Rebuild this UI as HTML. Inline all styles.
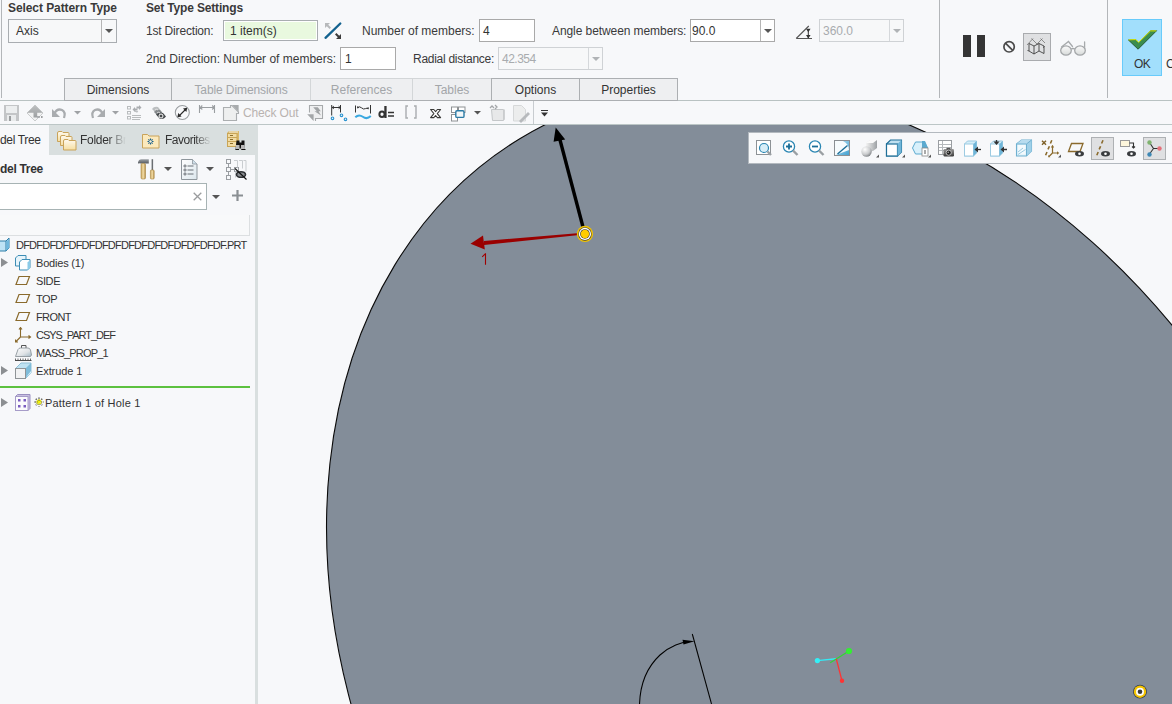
<!DOCTYPE html>
<html><head><meta charset="utf-8">
<style>
*{box-sizing:border-box;margin:0;padding:0}
html,body{width:1172px;height:704px;overflow:hidden;background:#f7f8fa;font-family:"Liberation Sans",sans-serif;color:#333;font-size:12px}
.a{position:absolute;white-space:nowrap}
.lbl{position:absolute;white-space:nowrap;font-size:12px;color:#3a3a3a;line-height:14px}
.fld{position:absolute;background:#fff;border:1px solid #a9a9a9}
.fld.dis{background:#f7f8f9;border-color:#cfd2d5}
.dd{position:absolute;top:0;bottom:0;border-left:1px solid #b5b5b5}
.tri{position:absolute;width:0;height:0;border-left:4px solid transparent;border-right:4px solid transparent;border-top:4px solid #555}
.tab{position:absolute;top:78px;height:23px;border:1px solid #acafb2;background:#eeeff1;text-align:center;line-height:23px;font-size:12px;z-index:2}
.tab.dis{color:#a3a6a9;background:#eeeff1;border-color:#d3d6d8;border-bottom-color:#acafb2;z-index:1}
.ti{position:absolute;font-size:11px;line-height:14px;color:#333;white-space:nowrap}
</style></head><body>

<!-- ===== Ribbon ===== -->
<div class="a" style="left:0;top:0;width:1172px;height:100px;background:#f7f8fa"></div>
<div class="a" style="left:1px;top:0;width:1px;height:98px;background:#b3b6b9"></div>
<div class="a" style="left:939px;top:0;width:1px;height:98px;background:#b3b6b9"></div>
<div class="a" style="left:1107px;top:0;width:1px;height:98px;background:#b3b6b9"></div>

<div class="lbl" style="left:8px;top:1px;font-weight:bold;letter-spacing:-0.08px">Select Pattern Type</div>
<div class="fld" style="left:8px;top:19px;width:109px;height:24px;background:#f7f8f9;border-color:#a9adb1">
  <div class="a" style="left:7px;top:4px;font-size:12px">Axis</div>
  <div class="dd" style="left:92px;width:16px"><div class="tri" style="left:3px;top:9px"></div></div>
</div>

<div class="lbl" style="left:146px;top:1px;font-weight:bold;letter-spacing:-0.17px">Set Type Settings</div>
<div class="lbl" style="left:146px;top:24px;letter-spacing:-0.18px">1st Direction:</div>
<div class="fld" style="left:223px;top:20px;width:95px;height:21px;background:#e9f9df;border-color:#a9adb1;box-shadow:inset 0 0 0 1px #fff">
  <div class="a" style="left:6px;top:3px">1 item(s)</div>
</div>
<div class="lbl" style="left:362px;top:24px">Number of members:</div>
<div class="fld" style="left:479px;top:19px;width:56px;height:23px"><div class="a" style="left:3px;top:4px">4</div></div>
<div class="lbl" style="left:552px;top:24px;letter-spacing:-0.08px">Angle between members:</div>
<div class="fld" style="left:690px;top:19px;width:85px;height:23px">
  <div class="a" style="left:1px;top:4px">90.0</div>
  <div class="dd" style="left:69px;width:15px"><div class="tri" style="left:3px;top:9px"></div></div>
</div>
<div class="fld dis" style="left:819px;top:19px;width:85px;height:23px">
  <div class="a" style="left:3px;top:4px;color:#a8abae">360.0</div>
  <div class="dd" style="left:69px;width:15px;border-color:#d5d8db"><div class="tri" style="left:3px;top:9px;border-top-color:#b0b3b6"></div></div>
</div>

<div class="lbl" style="left:146px;top:52px">2nd Direction: Number of members:</div>
<div class="fld" style="left:340px;top:47px;width:56px;height:23px"><div class="a" style="left:4px;top:4px">1</div></div>
<div class="lbl" style="left:413px;top:52px;letter-spacing:-0.27px">Radial distance:</div>
<div class="fld dis" style="left:498px;top:47px;width:105px;height:23px">
  <div class="a" style="left:3px;top:4px;color:#a8abae;letter-spacing:-0.5px">42.354</div>
  <div class="dd" style="left:89px;width:15px;border-color:#d5d8db"><div class="tri" style="left:3px;top:9px;border-top-color:#b0b3b6"></div></div>
</div>

<!-- ribbon icons -->
<svg class="a" style="left:320px;top:18px" width="24" height="26" viewBox="320 18 24 26">
  <path d="M325.5,37.8 L340.3,23.5" stroke="#13628f" stroke-width="2.3" stroke-linecap="round"/>
  <path d="M325,23 h5 l-1.8,1.8 l2.8,2.8 l-1.4,1.4 l-2.8,-2.8 l-1.8,1.8z" fill="#b7b9bb"/>
  <path d="M341,39 h-5 l1.8,-1.8 l-2.8,-2.8 l1.4,-1.4 l2.8,2.8 l1.8,-1.8z" fill="#3b3b3b"/>
</svg>
<svg class="a" style="left:794px;top:24px" width="20" height="17" viewBox="794 24 20 17">
  <path d="M796.2,38.5 h15.8 M796.2,38.5 L808.8,26" stroke="#555" stroke-width="1.1" fill="none"/>
  <path d="M808.3,29.2 v8.8" stroke="#333" stroke-width="1"/>
  <path d="M806,28.8 h4.6 l-2.3,3.4z M806,35 h4.6 l-2.3,3.4z" fill="#333"/>
</svg>
<div class="a" style="left:963px;top:35px;width:8px;height:22px;background:#353535"></div>
<div class="a" style="left:977px;top:35px;width:8px;height:22px;background:#353535"></div>
<svg class="a" style="left:1001px;top:39px" width="17" height="16" viewBox="1001 39 17 16">
  <circle cx="1009.1" cy="46.8" r="5.2" fill="none" stroke="#4a4a4a" stroke-width="1.7"/>
  <path d="M1005.5,43.2 l7.2,7.2" stroke="#4a4a4a" stroke-width="1.7"/>
</svg>
<div class="a" style="left:1023px;top:33px;width:28px;height:28px;background:#dfe0e2;border:1px solid #a9abae"></div>
<svg class="a" style="left:1025px;top:36px" width="24" height="22" viewBox="1025 36 24 22">
  <g stroke="#3a3a3a" stroke-width="0.85" fill="none">
  <path d="M1029,43.5 L1034,46 L1039,43.5 L1044,46"/>
  <path d="M1029,43.5 V51 L1034,54 V46 M1034,54 L1039,51 V43.5 M1039,51 L1044,53.5 V46"/>
  <path d="M1027.5,50.5 L1029,51 M1043,47.5 l1.5,-1"/>
  </g>
  <g stroke="#666" stroke-width="0.7" fill="none">
  <path d="M1027,45 L1033,38.5 M1031.5,38.5 L1038,45 M1036,45 L1042.5,38.5 M1040.5,38.5 L1045,43"/>
  </g>
</svg>
<svg class="a" style="left:1058px;top:38px" width="30" height="20" viewBox="1058 38 30 20">
  <defs><linearGradient id="lens" x1="0" y1="0" x2="0" y2="1"><stop offset="0" stop-color="#fbfbfb"/><stop offset="1" stop-color="#d7dad9"/></linearGradient></defs>
  <path d="M1061.5,47 L1068.5,41.5 L1072.5,46.5 M1084.6,42 V49" stroke="#a7aaac" stroke-width="1.3" fill="none" stroke-linecap="round"/>
  <ellipse cx="1066" cy="50.5" rx="5.3" ry="4.6" fill="url(#lens)" stroke="#a3a6a8" stroke-width="1.3"/>
  <ellipse cx="1080" cy="50.5" rx="5.3" ry="4.6" fill="url(#lens)" stroke="#a3a6a8" stroke-width="1.3"/>
  <path d="M1071.2,49 q1.8,-1 3.6,0" stroke="#a3a6a8" stroke-width="1.3" fill="none"/>
</svg>
<!-- OK button -->
<div class="a" style="left:1122px;top:19px;width:40px;height:57px;background:#a2dffc;border:1px solid #68cbfb"></div>
<svg class="a" style="left:1126px;top:28px" width="34" height="24" viewBox="1126 28 34 24">
  <path d="M1128.4,40 L1135.8,39.6 L1138.6,42.7 L1150.6,30.7 L1156.6,30.7 L1138.1,49.2z" fill="#3a8d4f" stroke="#1c4a24" stroke-width="0.8" stroke-linejoin="round"/>
  <path d="M1128.6,39.9 L1135.8,39.6 L1138.6,42.5 L1150.6,30.9 L1156.2,30.9" stroke="#e2f000" stroke-width="1" fill="none"/>
</svg>
<div class="a" style="left:1134px;top:57px;font-size:12px;color:#333;letter-spacing:-0.5px">OK</div>
<div class="a" style="left:1166px;top:57px;font-size:12px;color:#333">C</div>

<!-- tabs -->
<div class="tab" style="left:64px;width:108px">Dimensions</div>
<div class="tab dis" style="left:171px;width:140px;letter-spacing:-0.1px">Table Dimensions</div>
<div class="tab dis" style="left:310px;width:103px">References</div>
<div class="tab dis" style="left:412px;width:80px">Tables</div>
<div class="tab" style="left:491px;width:89px">Options</div>
<div class="tab" style="left:579px;width:99px">Properties</div>
<div class="a" style="left:0;top:100px;width:1172px;height:1px;background:#b9c2c2"></div>

<!-- toolbar row -->
<div class="a" style="left:0;top:101px;width:1172px;height:23px;background:#f7f8fa"></div>
<div class="a" style="left:0;top:124px;width:1172px;height:1px;background:#bcc6c6"></div>
<div class="a" style="left:533px;top:101px;width:1px;height:23px;background:#c8ccd0"></div>
<div class="a" style="left:243px;top:106px;font-size:12px;color:#b9b3b0;letter-spacing:-0.15px">Check Out</div>
<svg class="a" style="left:0;top:100px" width="560" height="24" viewBox="0 100 560 24">
  <!-- save -->
  <rect x="4" y="105" width="15" height="16" fill="#c3c5c7"/>
  <rect x="6" y="106" width="11" height="7" fill="#eceeef"/>
  <rect x="7" y="115" width="9" height="6" fill="#e9ebec"/>
  <rect x="9" y="116" width="2" height="5" fill="#9a9d9f"/>
  <!-- regen diamond -->
  <defs><linearGradient id="rg" x1="0" y1="0" x2="0" y2="1"><stop offset="0" stop-color="#bdbfc0"/><stop offset="1" stop-color="#9c9fa1"/></linearGradient></defs>
  <path d="M35,105 l8,8 l-8,8 l-8,-8z" fill="#f1f2f2" stroke="#c5c7c8" stroke-width="0.9"/>
  <path d="M35,105.3 L42.6,112.8 H37.2 V117.6 H33.5 V112.8 H27.4z" fill="url(#rg)"/>
  <rect x="37" y="116.2" width="3" height="1.5" fill="#9c9fa1"/>
  <rect x="41" y="116.2" width="1.6" height="1.6" fill="#858889"/>
  <!-- undo -->
  <path d="M54,114 q3,-6 8,-4 q4,2 2,8" stroke="#a9acaf" stroke-width="2.2" fill="none"/>
  <path d="M52,109 v8 h8z" fill="#a9acaf"/>
  <path d="M74,111 h7 l-3.5,3.5z" fill="#9fa2a5"/>
  <!-- redo -->
  <path d="M103,114 q-3,-6 -8,-4 q-4,2 -2,8" stroke="#a9acaf" stroke-width="2.2" fill="none"/>
  <path d="M105,109 v8 h-8z" fill="#a9acaf"/>
  <path d="M112,111 h7 l-3.5,3.5z" fill="#9fa2a5"/>
  <!-- regen list -->
  <g fill="none" stroke="#b9bcbe" stroke-width="1"><rect x="127.5" y="106.5" width="3" height="2.5"/><rect x="127.5" y="111.5" width="3" height="2.5"/><rect x="127.5" y="116.5" width="3" height="2.5"/>
  <path d="M132,115.5 h9 M132,117.5 h9 M132,119.5 h8"/></g>
  <path d="M132.5,109.5 l2.5,-2.5 v1.5 h2.5 v2 h-2.5 v1.5z" fill="#a9acaf"/>
  <path d="M141.5,107.5 l-2.5,-2.5 v1.5 h-2.5 v2 h2.5 v1.5z" fill="#a9acaf"/>
  <path d="M135,110.5 q1,2 3,1" stroke="#b5b8bb" stroke-width="1.2" fill="none"/>
  <!-- layers eye -->
  <path d="M152,109 q2,-3 6,-2 l4,5 q-1,3 -5,2z" fill="#bcbfc1"/>
  <path d="M154,112 q2,-3 6,-2 l4,5 q-1,3 -5,2z" fill="#85898c"/>
  <path d="M156,114.5 q3,-3 7,-1.5 l3,3.5 q-2,3 -6,2.5z" fill="#45494c"/>
  <path d="M155,110 q1.5,-1.5 3,0 M157,113 q1.5,-1.5 3,0" stroke="#e8e8e8" stroke-width="0.9" fill="none"/>
  <circle cx="161" cy="116" r="2" fill="none" stroke="#fff" stroke-width="1"/>
  <!-- circle arrow -->
  <circle cx="182.3" cy="112.5" r="7" fill="none" stroke="#9a9ea1" stroke-width="1.1"/>
  <path d="M179,116 l6.5,-6.5" stroke="#2a2a2a" stroke-width="1.1"/>
  <path d="M187.2,107.8 l-4.2,0.8 l3.4,3.4z M177.4,117.2 l4.2,-0.8 l-3.4,-3.4z" fill="#2a2a2a"/>
  <!-- dim -->
  <path d="M199.5,105 v8 M214.5,105 v8 M200,107.5 h14 M202.3,105.5 l-2,2 l2,2 M212.2,105.5 l2,2 l-2,2" stroke="#9a9ea1" fill="none" stroke-width="1.1"/>
  <!-- checkout doc -->
  <path d="M223.5,120.5 V107.5 H230.5 V105.5 H232 L238.5,112 V113.5 H236.5 V120.5z" fill="#eeefef" stroke="#abaeb0" stroke-width="1.1"/>
  <path d="M232,105 H238.6 V111.8z" fill="#a8abad"/>
  <!-- doc lightning -->
  <path d="M309.5,112.5 V105.5 H322.5 V118.5 H315.5 V121" fill="#eeeff0" stroke="#a6a9ab" stroke-width="1.1"/>
  <path d="M310,106 H322 V118 H315 V113.5 H310z" fill="#eeeff0"/>
  <path d="M307.2,114.2 H313.6 V121z" fill="#a3a6a8"/>
  <path d="M313.2,107.2 H317.8 L320.8,111.3 H318.6 L321,115.6 L314.5,111.3 H316.8z" fill="#a0a3a5"/>
  <!-- dim with dots -->
  <path d="M331.7,105 v10.5 M340.5,105 v7.5 M332,107.5 h8.3 M333.8,106.2 l-1.6,1.3 l1.6,1.3 M338.6,106.2 l1.6,1.3 l-1.6,1.3" stroke="#333" fill="none" stroke-width="1"/>
  <circle cx="332.5" cy="118.3" r="1.3" fill="none" stroke="#2a93d0" stroke-width="1.1"/>
  <circle cx="341.5" cy="115.3" r="1.3" fill="none" stroke="#2a93d0" stroke-width="1.1"/>
  <circle cx="345.5" cy="119.3" r="1.3" fill="none" stroke="#2a93d0" stroke-width="1.1"/>
  <!-- wave -->
  <path d="M355.5,105.5 v7 M370.5,105 v8.5" stroke="#333" fill="none" stroke-width="1"/>
  <path d="M357.5,107.5 q2,-1.5 4,0.3 q2,2 4,0.8 q1.5,-0.8 3,0" stroke="#333" fill="none" stroke-width="1"/>
  <path d="M357,106 l0.3,2.5 l2,-0.8z M369,107.3 l-0.8,2.3 l-1.5,-1.6z" fill="#333"/>
  <path d="M355.3,117.3 q3.5,-3.5 7.5,-0.5 q4,3 8,-0.7" stroke="#3aa8e0" fill="none" stroke-width="2"/>
  <!-- d= -->
  <rect x="384.3" y="106" width="2.3" height="12" fill="#333"/>
  <ellipse cx="382" cy="114.3" rx="2.6" ry="2.8" fill="none" stroke="#333" stroke-width="2"/>
  <path d="M388,112.5 h6 M388,116 h6" stroke="#333" stroke-width="1.6"/>
  <!-- brackets -->
  <path d="M408,106 h-2 v12 h2 M414,106 h2 v12 h-2" stroke="#a9acaf" stroke-width="1.4" fill="none"/>
  <!-- X -->
  <path d="M430.6,109.5 H433.8 L435.6,111.6 L437.4,109.5 H440.6 L437.3,113.6 L440.6,117.6 H437.4 L435.6,115.5 L433.8,117.6 H430.6 L433.9,113.6z" fill="#fff" stroke="#3a3a38" stroke-width="1.1" stroke-linejoin="round"/>
  <!-- boxes -->
  <g fill="#fff" stroke="#8e9194" stroke-width="1"><rect x="451.5" y="107" width="6" height="5.5"/><rect x="451.5" y="114.5" width="6" height="6.5"/><rect x="458.5" y="107" width="6.5" height="5.5"/></g>
  <rect x="455.8" y="110.8" width="8.2" height="6.6" rx="1.2" fill="#f2f7f9" stroke="#2a7aa5" stroke-width="1.4"/>
  <path d="M474,111 h7 l-3.5,3.5z" fill="#555"/>
  <!-- doc w arrows -->
  <path d="M491.5,109.5 h12 v11 h-11 z" fill="#e7e8e9" stroke="#c4c7c9"/>
  <path d="M503.5,109.5 v11 l1.5,-1 v-10z" fill="#cfd1d3"/>
  <path d="M490,108 l2,-2 l2,2 M495,105 l2,2 l-2,2" stroke="#a3a6a9" fill="none" stroke-width="1.3"/>
  <!-- doc w pencil -->
  <path d="M513.5,105.5 h8 l4,4 v11.5 h-12z" fill="#eceded" stroke="#d6d8d9"/>
  <path d="M519,121 l9,-9 l2,2 l-9,9z" fill="#b7babd"/>
  <!-- customize -->
  <path d="M541,110.5 h7" stroke="#333" stroke-width="1"/>
  <path d="M541,112.5 h7 l-3.5,4z" fill="#333"/>
</svg>

<!-- ===== Graphics ===== -->
<svg class="a" style="left:0;top:0" width="1172" height="704" viewBox="0 0 1172 704">
  <defs><clipPath id="gclip"><rect x="258" y="125" width="914" height="579"/></clipPath></defs>
  <rect x="258" y="125" width="914" height="579" fill="#f7f8fa"/>
  <g clip-path="url(#gclip)">
    <ellipse cx="836.96" cy="659.97" rx="468.08" ry="610.15" transform="rotate(-31.32 836.96 659.97)" fill="#838d99" stroke="#0a0a0a" stroke-width="1.1"/>
    <!-- black direction arrow -->
    <line x1="583" y1="227" x2="559.5" y2="138" stroke="#000" stroke-width="3.4"/>
    <polygon points="555.7,127.5 553.6,141.8 565.2,139.4" fill="#000"/>
    <!-- red arrow -->
    <polygon points="577,233.3 577,235.3 484,244.9 484,240.9" fill="#9a0000"/>
    <polygon points="470.5,243.8 483,235.6 484.8,249.5" fill="#9a0000"/>
    <path d="M485.5,253.3 V264.8 M485.3,253.8 L482.2,256.8" stroke="#a00000" stroke-width="1.1" fill="none"/>
    <!-- marker -->
    <circle cx="584.94" cy="233.94" r="8.1" fill="#f2c300"/>
    <circle cx="584.94" cy="233.94" r="6.7" fill="#3c3c3c"/>
    <circle cx="584.94" cy="233.94" r="6.1" fill="#fff"/>
    <circle cx="584.94" cy="233.94" r="4.8" fill="#3c3c3c"/>
    <circle cx="584.94" cy="233.94" r="4.2" fill="#ffcc00"/>
    <!-- bottom arc & line -->
    <path d="M639.5,705 C640,685 646,668 660,655 C670,646 682,642 690,641.5" fill="none" stroke="#000" stroke-width="1.05"/>
    <polygon points="694.5,641.2 682.5,639.8 683.5,644.5" fill="#000"/>
    <line x1="692.3" y1="634" x2="711.8" y2="705" stroke="#000" stroke-width="1.05"/>
    <!-- triad -->
    <line x1="836.3" y1="658.8" x2="817.4" y2="660.6" stroke="#33eaf5" stroke-width="1.4"/>
    <line x1="830.2" y1="662.7" x2="849" y2="651" stroke="#2fd82f" stroke-width="1.2"/>
    <line x1="836.3" y1="658.8" x2="842" y2="680.8" stroke="#f33" stroke-width="1.3"/>
    <circle cx="817.4" cy="660.6" r="2.6" fill="#33f0f7"/>
    <circle cx="849" cy="651" r="3.1" fill="#33ee33"/>
    <circle cx="842" cy="680.8" r="2.2" fill="#f33"/>
    <!-- small marker -->
    <circle cx="1140" cy="691.7" r="6.9" fill="#2f3a50"/>
    <circle cx="1140" cy="691.7" r="6.2" fill="#f5c400"/>
    <circle cx="1140" cy="691.7" r="4" fill="#fff"/>
    <circle cx="1140" cy="691.7" r="2.3" fill="#3a3a3a"/>
  </g>
</svg>

<!-- ===== Graphics toolbar ===== -->
<div class="a" style="left:748px;top:132px;width:430px;height:32px;background:#f7f8fa;border:1px solid #b3b9bf"></div>
<div class="a" style="left:1091px;top:137px;width:23px;height:23px;background:#dfe0e2;border:1px solid #aeb1b4"></div>
<div class="a" style="left:1143px;top:137px;width:23px;height:23px;background:#dfe0e2;border:1px solid #aeb1b4"></div>
<svg class="a" style="left:748px;top:132px" width="424" height="32" viewBox="748 132 424 32">
  <!-- zoom window -->
  <rect x="756.5" y="140.5" width="14" height="14" fill="#fff" stroke="#8d9296"/>
  <circle cx="764" cy="148" r="4.5" fill="#d8eef8" stroke="#2a86b3" stroke-width="1.2"/>
  <path d="M767.5,151.5 l3.5,3.5" stroke="#9a9fa3" stroke-width="2.4"/>
  <!-- zoom in -->
  <circle cx="789" cy="146.5" r="5.6" fill="#fff" stroke="#2a86b3" stroke-width="1.3"/>
  <path d="M786,146.5 h6 M789,143.5 v6" stroke="#1b6e98" stroke-width="1.8"/>
  <path d="M793,150.5 l4.5,4.5" stroke="#9a9fa3" stroke-width="2.4"/>
  <!-- zoom out -->
  <circle cx="815" cy="146.5" r="5.6" fill="#fff" stroke="#2a86b3" stroke-width="1.3"/>
  <path d="M812,146.5 h6" stroke="#1b6e98" stroke-width="1.8"/>
  <path d="M819,150.5 l4.5,4.5" stroke="#9a9fa3" stroke-width="2.4"/>
  <!-- refit -->
  <defs>
    <linearGradient id="rfg" x1="0" y1="0" x2="1" y2="1"><stop offset="0" stop-color="#bfe3f4"/><stop offset="1" stop-color="#3f9fd0"/></linearGradient>
    <radialGradient id="sph" cx="0.35" cy="0.3" r="0.8"><stop offset="0" stop-color="#ffffff"/><stop offset="0.6" stop-color="#c9cbcd"/><stop offset="1" stop-color="#6f7377"/></radialGradient>
    <linearGradient id="cub" x1="0" y1="0" x2="1" y2="0"><stop offset="0" stop-color="#f4f4f4"/><stop offset="1" stop-color="#9da1a4"/></linearGradient>
  </defs>
  <rect x="834.5" y="140.5" width="15" height="15" fill="url(#rfg)" stroke="#8b8f93"/>
  <path d="M835,141 h8 q6,3 6,9 l-13,5 h-1z" fill="#f7fbfd"/>
  <path d="M837.5,154 l10,-8.5" stroke="#1b6e98" stroke-width="1.4"/>
  <!-- shading -->
  <path d="M866,143 l4,-3 h7 v8 l-4,3 h-7z" fill="url(#cub)"/>
  <path d="M866,143 l4,-3 h7 l-4,3z" fill="#fafafa"/>
  <circle cx="866.5" cy="151.5" r="5.2" fill="url(#sph)"/>
  <path d="M876,157.5 h3 v-3z" fill="#555"/>
  <!-- saved orientation cube -->
  <path d="M886.5,144 l4,-4 h11 v12 l-4,4 h-11z" fill="#bfe0f0" stroke="#1f6f98" stroke-width="1.1"/>
  <rect x="886.5" y="144" width="11" height="12" fill="#fff" stroke="#1f6f98" stroke-width="1.2"/>
  <path d="M897.5,144 l4,-4 v12 l-4,4z" fill="#6fb5d8"/>
  <path d="M902,157.5 h3 v-3z" fill="#555"/>
  <!-- named view -->
  <path d="M912.5,148 l3,-6 h9 l3,6 l-3,6 h-9z" fill="#d8f0fb" stroke="#5aa9cf"/>
  <path d="M922,141 l3,0 l3,7 h-6z" fill="#5aa9cf"/>
  <rect x="922" y="148" width="6" height="8" fill="#fff" stroke="#888" stroke-width="0.8"/>
  <path d="M924,151 h2 M924,153 h2" stroke="#555"/>
  <path d="M928,157.5 h3 v-3z" fill="#555"/>
  <!-- appearance camera -->
  <rect x="938.5" y="140.5" width="13" height="14" fill="#fff" stroke="#9a9ea2"/>
  <path d="M939,144.5 h12 M939,147.5 h12 M939,150.5 h12 M942.5,141 v13" stroke="#b5b9bc"/>
  <defs><linearGradient id="cam" x1="0" y1="0" x2="0" y2="1"><stop offset="0" stop-color="#9a9a9a"/><stop offset="1" stop-color="#3a3a3a"/></linearGradient></defs>
  <rect x="943.5" y="149" width="10.5" height="7.5" rx="1.2" fill="url(#cam)"/>
  <rect x="946.5" y="147.8" width="4" height="2" fill="#555"/>
  <circle cx="948.7" cy="152.7" r="2.6" fill="#222" stroke="#ddd" stroke-width="0.8"/>
  <circle cx="948.2" cy="152.2" r="0.8" fill="#aaa"/>
  <!-- cube arrow -->
  <path d="M964.5,144 l3,-3 h9 v12 l-3,3 h-9z" fill="#d4edf8" stroke="#9dcbe2"/>
  <rect x="964.5" y="144" width="9" height="12" fill="#fff" stroke="#9dcbe2"/>
  <path d="M973.5,144 l3,-3 v12 l-3,3z" fill="#6fb5d8"/>
  <path d="M981,149.5 h-4" stroke="#333" stroke-width="1.3"/><path d="M974.5,149.5 l3.5,-3 v6z" fill="#333"/>
  <!-- cube arrows -->
  <path d="M990.5,144 l3,-3 h9 v12 l-3,3 h-9z" fill="#d4edf8" stroke="#9dcbe2"/>
  <rect x="990.5" y="144" width="9" height="12" fill="#fff" stroke="#9dcbe2"/>
  <path d="M999.5,144 l3,-3 v12 l-3,3z" fill="#6fb5d8"/>
  <path d="M1007,149.5 h-4 M996.5,140 v2.5" stroke="#333" stroke-width="1.3"/><path d="M1000.5,149.5 l3.5,-3 v6z M996.5,145 l-3,-3.5 h6z" fill="#333"/>
  <!-- transparent cube -->
  <path d="M1016.5,144 l5,-4 h10 v11 l-5,5 h-10z" fill="#dcf0f9" stroke="#6fb0d0" stroke-width="1.1"/>
  <path d="M1016.5,144 l5,-4 h10 l-5,4z" fill="#b7dcef"/>
  <path d="M1026.5,144 l5,-4 v11 l-5,5z" fill="#9fd0e8"/>
  <path d="M1018,145 h7.5 v9.5 h-7.5z" fill="#f3fafd"/>
  <path d="M1018,154.5 l7.5,-5 M1018,152 l5,-4" stroke="#8fc4de" stroke-width="0.9"/>
  <path d="M1016.5,144 h10 v12 M1026.5,144 l5,-4" stroke="#6fb0d0" fill="none"/>
  <!-- datum display filter -->
  <path d="M1042,140.8 l4,4 M1046,140.8 l-4,4" stroke="#7d5f26" stroke-width="1.4"/>
  <path d="M1051.8,140.3 l-1.4,3.2 M1049.4,146.2 l-1.4,3.2 M1047,152 l-1.4,3.2" stroke="#8a6a2c" stroke-width="1.6"/>
  <path d="M1052.5,145.5 v7.5 h5.5 M1052.5,153 l-3.5,3.5" stroke="#8a6a2c" stroke-width="1.2" fill="none"/>
  <path d="M1050.8,147.5 l1.7,-2.5 l1.7,2.5z M1057,151.3 l2.3,1.7 l-2.3,1.7z M1048.2,155 v2.2 h2.2z" fill="#8a6a2c"/>
  <path d="M1058,157.5 h3 v-3z" fill="#555"/>
  <!-- plane display -->
  <path d="M1071.5,143.5 h11.5 l-3,8 h-11.5z" fill="none" stroke="#8a6a2c" stroke-width="1.3"/>
  <ellipse cx="1079.5" cy="153.8" rx="4.5" ry="2.7" fill="#3a3d40"/>
  <circle cx="1079.5" cy="153.8" r="1.3" fill="#fff"/>
  <!-- axis display -->
  <path d="M1103,140.3 l-1.4,3.2 M1100.6,146.2 l-1.4,3.2 M1098.2,152 l-1.4,3.2" stroke="#8a6a2c" stroke-width="1.6"/>
  <ellipse cx="1105.5" cy="153.8" rx="4.5" ry="2.7" fill="#3a3d40"/>
  <circle cx="1105.5" cy="153.8" r="1.3" fill="#fff"/>
  <!-- annotation display -->
  <rect x="1120.5" y="140.5" width="9" height="6" fill="#fdf6dc" stroke="#999"/>
  <path d="M1129.5,143 h4 v5 M1132,146.5 l1.5,1.5 l1.5,-1.5" stroke="#333" fill="none" stroke-width="1.1"/>
  <ellipse cx="1131.5" cy="153.8" rx="4.5" ry="2.7" fill="#3a3d40"/>
  <circle cx="1131.5" cy="153.8" r="1.3" fill="#fff"/>
  <!-- spin center -->
  <path d="M1149.5,142.5 l4,6 l6,0 M1153.5,148.5 l-4,5.5" stroke="#333" fill="none" stroke-width="1.1"/>
  <circle cx="1149.5" cy="142.5" r="2.2" fill="#7fb36f"/>
  <circle cx="1159.5" cy="148.5" r="2.2" fill="#e5707a"/>
  <circle cx="1149.5" cy="154.5" r="2.2" fill="#3e88b5"/>
</svg>

<!-- ===== Left panel ===== -->
<div class="a" style="left:0;top:125px;width:258px;height:579px;background:#d9dfdf"></div>
<div class="a" style="left:0;top:155px;width:255px;height:549px;background:#f7f8fa"></div>
<div class="a" style="left:0;top:125px;width:49px;height:30px;background:#f7f8fa"></div>
<div class="a" style="left:0;top:133px;font-size:12px;color:#333;letter-spacing:-0.35px">del Tree</div>
<svg class="a" style="left:56px;top:130px" width="22" height="22" viewBox="0 0 22 22">
  <defs><linearGradient id="fg" x1="0" y1="0" x2="0" y2="1"><stop offset="0" stop-color="#fffaf0"/><stop offset="1" stop-color="#f6dea0"/></linearGradient></defs>
  <g stroke="#c9a35a" stroke-width="1" fill="url(#fg)">
    <path d="M1.5,3 q0,-1.5 1.5,-1.5 h3 l1,1 h5 q1,0 1,1 v8 h-11.5z"/>
    <path d="M4.5,7 q0,-1.5 1.5,-1.5 h3 l1,1 h5 q1,0 1,1 v8 h-11.5z"/>
    <path d="M7.5,11 q0,-1.5 1.5,-1.5 h3 l1,1 h6 q1,0 1,1 v8.5 h-12.5z"/>
  </g>
</svg>
<div class="a" style="left:80px;top:133px;font-size:12px;color:#333;letter-spacing:-0.3px;width:46px;overflow:hidden;-webkit-mask-image:linear-gradient(90deg,#000 60%,transparent 100%)">Folder Browser</div>
<svg class="a" style="left:142px;top:132px" width="18" height="17" viewBox="0 0 18 17">
  <path d="M0.5,2.5 h5 l1.5,1.5 h10 v12 h-16.5z" fill="#fbe9bd" stroke="#c9a35a"/>
  <path d="M8.5,6.5 v6 M5.5,9.5 h6 M6.4,7.4 l4.2,4.2 M10.6,7.4 l-4.2,4.2" stroke="#175e8a" stroke-width="1.1"/>
  <circle cx="8.5" cy="9.5" r="1.3" fill="#fdf1d2"/>
</svg>
<div class="a" style="left:165px;top:133px;font-size:12px;color:#333;letter-spacing:-0.5px;width:46px;overflow:hidden;-webkit-mask-image:linear-gradient(90deg,#000 65%,transparent 100%)">Favorites</div>
<svg class="a" style="left:224px;top:128px" width="26" height="26" viewBox="224 128 26 26">
  <path d="M227,133 l2,-2 h10 v15 l-1,1 h-11z" fill="#d9b86a"/>
  <rect x="227.5" y="133.5" width="9.5" height="13" fill="#f2dca4" stroke="#c9a557"/>
  <path d="M228,137.5 h9 M228,141.5 h9" stroke="#c9a557"/>
  <path d="M230,135.5 h3 M230,139.5 h3 M230,143.5 h3" stroke="#8a6d2e"/>
  <path d="M229,132 h9" stroke="#fff" stroke-width="0.8"/>
  <path d="M236.5,140.5 h3 v2 h2 v-2 h3 v9 h-3.5 l-1,-2 l-1,2 h-3.5z" fill="#111"/>
  <path d="M236,145 h3.5 v4 h-4z M241,145 h3.5 l0.5,4 h-4z" fill="#b9b9b9"/>
  <path d="M235.5,149.5 h3.5 M241.5,149.5 h4" stroke="#111" stroke-width="1"/>
</svg>

<div class="a" style="left:0;top:162px;font-size:12px;font-weight:bold;color:#333;letter-spacing:-0.3px">del Tree</div>
<svg class="a" style="left:136px;top:157px" width="20" height="24" viewBox="136 157 20 24">
  <defs><linearGradient id="hd" x1="0" y1="0" x2="0" y2="1"><stop offset="0" stop-color="#9ea3a8"/><stop offset="1" stop-color="#55595e"/></linearGradient>
  <linearGradient id="hw" x1="0" y1="0" x2="1" y2="0"><stop offset="0" stop-color="#c9a660"/><stop offset="0.5" stop-color="#f2dca6"/><stop offset="1" stop-color="#b38c45"/></linearGradient></defs>
  <path d="M138,162.5 Q138.5,159.3 141.5,159.2 H148.8 V163.5 H141 Q139.5,163 138,163.5z" fill="url(#hd)"/>
  <rect x="141" y="163.5" width="4.5" height="15.5" rx="1.2" fill="url(#hw)" stroke="#a88643" stroke-width="0.6"/>
  <rect x="151.6" y="159.2" width="1.5" height="11" fill="#6a6e72"/>
  <rect x="150.4" y="170" width="3.8" height="9" rx="1" fill="url(#hw)" stroke="#a88643" stroke-width="0.6"/>
</svg>
<div class="tri" style="left:164px;top:167px;border-top-color:#555;border-left-width:4px;border-right-width:4px;border-top-width:4px"></div>
<svg class="a" style="left:181px;top:159px" width="17" height="21" viewBox="0 0 17 21">
  <defs><linearGradient id="pg" x1="0" y1="0" x2="1" y2="1"><stop offset="0" stop-color="#ffffff"/><stop offset="1" stop-color="#dbe6ec"/></linearGradient></defs>
  <path d="M0.5,0.5 h11 l4.5,4.5 v15.5 h-15.5z" fill="url(#pg)" stroke="#8e969c"/>
  <path d="M11.5,0.5 v4.5 h4.5" fill="#cfe0ea" stroke="#8e969c" stroke-width="0.8"/>
  <g stroke="#5a6066" stroke-width="0.9" fill="none">
  <circle cx="4" cy="7" r="1.1"/><circle cx="4" cy="11" r="1.1"/><circle cx="4" cy="15" r="1.1"/>
  <path d="M6.5,7 h6 M6.5,11 h6 M6.5,15 h6"/></g>
</svg>
<div class="tri" style="left:206px;top:167px"></div>
<svg class="a" style="left:226px;top:159px" width="21" height="21" viewBox="0 0 21 21">
  <g fill="none" stroke="#9a9ea2" stroke-width="1">
  <rect x="0.5" y="0.5" width="4" height="4"/><rect x="0.5" y="8.5" width="4" height="4"/><rect x="0.5" y="16.5" width="4" height="4"/>
  <path d="M2.5,4.5 v4 M2.5,12.5 v4 M4.5,10.5 h4"/>
  <rect x="8.5" y="8.5" width="4" height="4"/>
  <path d="M8,1.5 h3.5 v7 M13,1.5 h3.5 v8 M17.5,1.5 h2.5 v11 M9.5,12.5 v6" stroke="#c9cdd0"/></g>
  <ellipse cx="15" cy="15.5" rx="4.5" ry="2.8" fill="#888c90" stroke="#2e3134" stroke-width="1.6"/>
  <path d="M9,9.5 L20.5,20.5" stroke="#111" stroke-width="1.1"/>
</svg>

<div class="a" style="left:0;top:183px;width:207px;height:27px;background:#fff;border:1px solid #a7b3b4;border-left:none"></div>
<svg class="a" style="left:193px;top:192px" width="9" height="9" viewBox="0 0 9 9"><path d="M0.7,0.7 L8.3,8.3 M8.3,0.7 L0.7,8.3" stroke="#9a9c9e" stroke-width="1.3"/></svg>
<div class="tri" style="left:212px;top:195px"></div>
<svg class="a" style="left:231px;top:189px" width="13" height="13" viewBox="0 0 13 13"><path d="M6.5,1 v11 M1,6.5 h11" stroke="#8a8f93" stroke-width="2.2"/></svg>

<div class="a" style="left:0;top:215px;width:250px;height:21px;border:1px solid #dcdfe1;border-left:none;border-top:none;background:#f8f9fa"></div>

<!-- tree -->
<svg class="a" style="left:0;top:238px" width="12" height="14" viewBox="0 0 12 14">
  <path d="M-3,3 h9 l3,-3 v10 l-3,3 h-9z" fill="#bfe3f5" stroke="#2f7fa8"/>
  <path d="M6,3 v10 M6,3 l3,-3" stroke="#2f7fa8"/>
  <path d="M6.5,3.5 l2.5,-2.5 v9 l-2.5,2.5z" fill="#6fb8de"/>
</svg>
<div class="ti" style="left:16px;top:238px;letter-spacing:-0.77px">DFDFDFDFDFDFDFDFDFDFDFDFDFDFDFDF.PRT</div>

<svg class="a" style="left:0;top:257px" width="10" height="10" viewBox="0 257 10 10"><path d="M1,258.0 L8,262.5 L1,267.0z" fill="#8c8f92"/></svg>
<svg class="a" style="left:15px;top:255px" width="17" height="17" viewBox="0 0 17 17">
  <path d="M0.5,3 l2.5,-2.5 h8 v8 l-2.5,2.5 h-8z" fill="#e6f4fb" stroke="#3d8db5"/>
  <path d="M4.5,7 l2.5,-2.5 h8 v8 l-2.5,2.5 h-8z" fill="#fff" stroke="#3d8db5"/>
  <path d="M12.5,7.5 l2.5,-2.5 v8 l-2.5,2.5z" fill="#8ccbe8"/>
</svg>
<div class="ti" style="left:36px;top:256px;letter-spacing:-0.2px">Bodies (1)</div>

<svg class="a" style="left:15px;top:275px" width="16" height="12" viewBox="0 0 16 12"><path d="M4,1.5 h10.5 l-3,8 h-10.5z" fill="none" stroke="#8a6a2c" stroke-width="1.2"/></svg>
<div class="ti" style="left:36px;top:274px;letter-spacing:-0.4px">SIDE</div>
<svg class="a" style="left:15px;top:293px" width="16" height="12" viewBox="0 0 16 12"><path d="M4,1.5 h10.5 l-3,8 h-10.5z" fill="none" stroke="#8a6a2c" stroke-width="1.2"/></svg>
<div class="ti" style="left:36px;top:292px;letter-spacing:-0.4px">TOP</div>
<svg class="a" style="left:15px;top:311px" width="16" height="12" viewBox="0 0 16 12"><path d="M4,1.5 h10.5 l-3,8 h-10.5z" fill="none" stroke="#8a6a2c" stroke-width="1.2"/></svg>
<div class="ti" style="left:36px;top:310px;letter-spacing:-0.6px">FRONT</div>

<svg class="a" style="left:15px;top:327px" width="17" height="17" viewBox="0 0 17 17"><path d="M5.5,0.5 v9.5 h10 M5.5,10 l-5,5 M4,2.5 l1.5,-2 l1.5,2 M13.5,8.5 l2,1.5 l-2,1.5 M0.5,12.5 v2.5 h2.5" fill="none" stroke="#8a6a2c" stroke-width="1.1"/></svg>
<div class="ti" style="left:36px;top:328px;letter-spacing:-1.05px">CSYS_PART_DEF</div>

<svg class="a" style="left:14px;top:343px" width="19" height="19" viewBox="14 343 19 19">
  <defs><linearGradient id="wg" x1="0" y1="0" x2="1" y2="1"><stop offset="0" stop-color="#ffffff"/><stop offset="0.6" stop-color="#dfe3e6"/><stop offset="1" stop-color="#9fb6c4"/></linearGradient></defs>
  <path d="M21.5,348 V345.5 H26 V348" stroke="#555" stroke-width="1" fill="none"/>
  <path d="M15.5,356.5 L18,349.5 Q18.8,348 20.5,348 H28 Q29.8,348 30.5,350 L31.5,355 L30.5,356.5z" fill="url(#wg)" stroke="#8e969c" stroke-width="0.9"/>
  <path d="M15,360.5 H31.5" stroke="#4a4a4a" stroke-width="1"/>
  <path d="M15.5,358.5 v2 M18,358.5 v2 M20.5,358.5 v2 M23,358.5 v2 M25.5,358.5 v2 M28,358.5 v2 M30.5,358.5 v2" stroke="#4a4a4a" stroke-width="0.8"/>
</svg>
<div class="ti" style="left:36px;top:346px;letter-spacing:-0.8px">MASS_PROP_1</div>

<svg class="a" style="left:0;top:365px" width="10" height="10" viewBox="0 365 10 10"><path d="M1,366.0 L8,370.5 L1,375.0z" fill="#8c8f92"/></svg>
<svg class="a" style="left:15px;top:362px" width="17" height="17" viewBox="0 0 17 17">
  <path d="M0.5,6.5 l5.5,-5.5 h10 v10 l-5.5,5.5 h-10z" fill="#bfe2f2" stroke="#8fbfd6"/>
  <path d="M10.5,6.5 l5.5,-5.5 v10 l-5.5,5.5z" fill="#7fbcd9"/>
  <path d="M10.5,16 l5.5,-5 v-2z" fill="#d9f0fa"/>
  <rect x="0.5" y="6.5" width="10" height="10" fill="#f1f2f3" stroke="#8f9497"/>
</svg>
<div class="ti" style="left:36px;top:364px;letter-spacing:-0.1px">Extrude 1</div>

<div class="a" style="left:0;top:386px;width:250px;height:2px;background:#5cc13f"></div>

<svg class="a" style="left:0;top:397px" width="10" height="10" viewBox="0 397 10 10"><path d="M1,398.0 L8,402.5 L1,407.0z" fill="#8c8f92"/></svg>
<svg class="a" style="left:15px;top:394px" width="16" height="17" viewBox="0 0 16 17">
  <path d="M0.5,2.5 l2,-2 h12.5 v14 l-2,2 h-12.5z" fill="#c8bfe0" stroke="#9a8fc0"/>
  <rect x="0.5" y="2.5" width="12.5" height="14" fill="#fbfbfd" stroke="#a69cc8"/>
  <g fill="#7a5cc0"><rect x="3" y="5" width="2.5" height="2.5"/><rect x="8.5" y="5" width="2.5" height="2.5"/><rect x="3" y="11" width="2.5" height="2.5"/><rect x="8.5" y="11" width="2.5" height="2.5"/></g>
</svg>
<svg class="a" style="left:34px;top:397px" width="10" height="10" viewBox="0 0 10 10">
  <path d="M5,0.5 v9 M0.5,5 h9 M1.8,1.8 l6.4,6.4 M8.2,1.8 l-6.4,6.4" stroke="#555" stroke-width="1.5" stroke-dasharray="1.3 0.8"/>
  <path d="M5,2 v6 M2,5 h6 M2.9,2.9 l4.2,4.2 M7.1,2.9 l-4.2,4.2" stroke="#f5f500" stroke-width="1"/>
</svg>

<div class="ti" style="left:45px;top:396px;letter-spacing:0.2px">Pattern 1 of Hole 1</div>
</body></html>
